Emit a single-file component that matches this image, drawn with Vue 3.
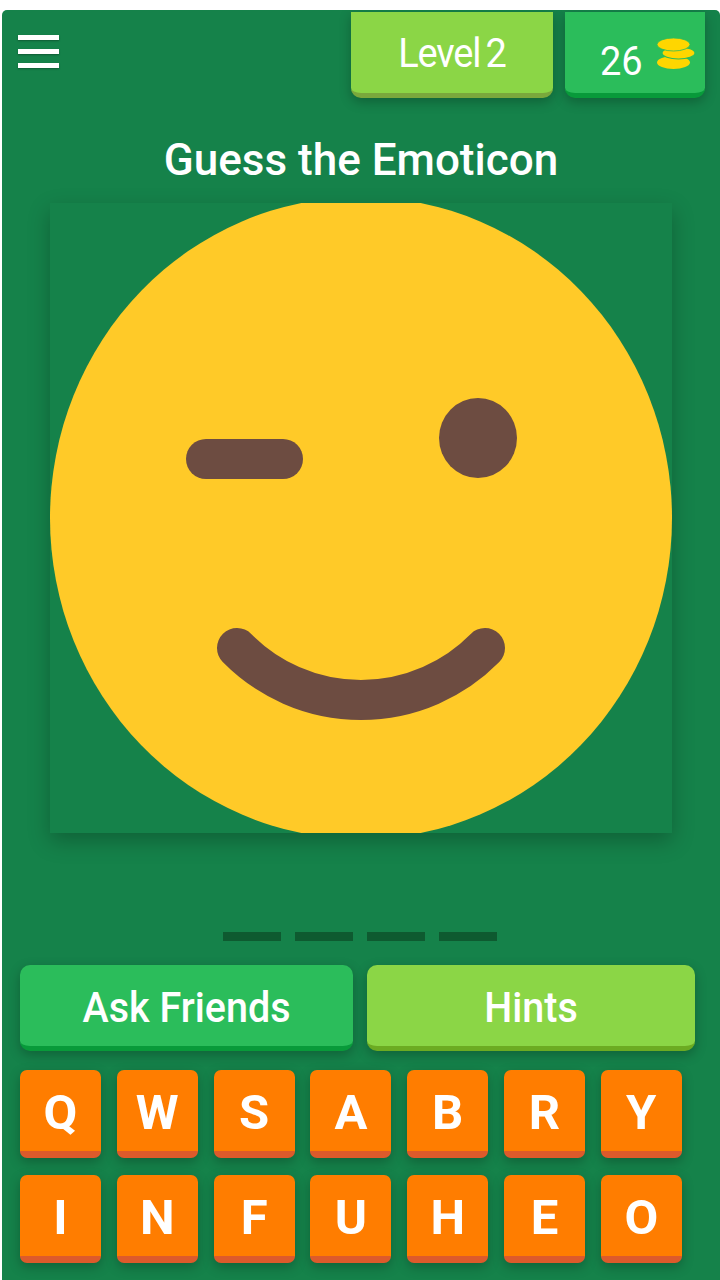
<script setup>
const rows = [
  ['Q', 'W', 'S', 'A', 'B', 'R', 'Y'],
  ['I', 'N', 'F', 'U', 'H', 'E', 'O']
]
const blanks = [1, 2, 3, 4]
</script>

<template>
  <div class="screen">
    <header class="topbar">
      <div class="menu">
        <span></span>
        <span></span>
        <span></span>
      </div>
      <div class="btn lime level"><span class="stretch">Level 2</span></div>
      <div class="btn green coins">
        <span class="stretch">26</span>
        <svg class="coin-icon" width="38" height="31" viewBox="0 0 38 31">
          <ellipse cx="16.5" cy="24.5" rx="16.5" ry="6.5" fill="#ffd600" />
          <ellipse cx="21.5" cy="15" rx="16.5" ry="6" fill="#ffd600" stroke="#2bbd5b" stroke-width="1.2" />
          <ellipse cx="16.5" cy="6.5" rx="16.5" ry="6.5" fill="#ffd600" stroke="#2bbd5b" stroke-width="0.8" />
        </svg>
      </div>
    </header>

    <h1 class="title">Guess the Emoticon</h1>

    <div class="picture">
      <svg width="622" height="630" viewBox="0 0 622 630">
        <ellipse cx="311" cy="315" rx="311" ry="321" fill="#ffca28" />
        <rect x="136" y="236" width="117" height="40" rx="20" fill="#6d4c41" />
        <ellipse cx="428" cy="235" rx="39" ry="40" fill="#6d4c41" />
        <path d="M187 445 A174 174 0 0 0 435 445" fill="none" stroke="#6d4c41" stroke-width="40" stroke-linecap="round" />
      </svg>
    </div>

    <div class="blanks">
      <span v-for="b in blanks" :key="b"></span>
    </div>

    <div class="actions">
      <div class="btn green ask"><span class="stretch">Ask Friends</span></div>
      <div class="btn lime hints"><span class="stretch">Hints</span></div>
    </div>

    <div class="keyboard">
      <div v-for="(row, i) in rows" :key="i" class="key-row">
        <div v-for="letter in row" :key="letter" class="key">{{ letter }}</div>
      </div>
    </div>
  </div>
</template>

<style scoped>
.screen {
  margin: 10px 0 0 2px;
  height: 1270px;
  background: #15824a;
  border-radius: 5px 5px 0 0;
  overflow: hidden;
  font-family: Roboto, "Liberation Sans", sans-serif;
  color: #fff;
}

.stretch {
  display: inline-block;
  transform: scaleY(1.06);
}

.topbar {
  display: flex;
  align-items: flex-start;
  height: 88px;
  padding: 2px 15px 0 16px;
}

.menu {
  display: flex;
  flex-direction: column;
  gap: 9px;
  width: 41px;
  margin-top: 23px;
}

.menu span {
  height: 5px;
  background: #fff;
  box-shadow: 0 1px 2px rgba(0, 0, 0, 0.3);
}

.btn {
  display: flex;
  align-items: center;
  justify-content: center;
  box-sizing: border-box;
  border-radius: 10px;
}

.green {
  background: #2bbd5b;
  border-bottom: 5px solid #089a3a;
  box-shadow: 0 4px 12px rgba(0, 0, 0, 0.25);
}

.lime {
  background: #8bd646;
  border-bottom: 5px solid #7aa83c;
  box-shadow: 0 4px 12px rgba(0, 0, 0, 0.25);
}

.level {
  width: 202px;
  height: 86px;
  margin-left: auto;
  border-radius: 0 0 10px 10px;
  font-size: 38px;
  letter-spacing: -1.2px;
  word-spacing: -3px;
}

.coins {
  width: 140px;
  height: 86px;
  margin-left: 12px;
  border-radius: 0 0 10px 10px;
  font-size: 38px;
  justify-content: flex-start;
  padding: 16px 0 0 35px;
}

.coin-icon {
  margin: -14px 0 0 14px;
}

.title {
  margin: 0;
  padding-top: 36px;
  height: 84px;
  box-sizing: border-box;
  text-align: center;
  font-size: 44px;
  line-height: 48px;
  font-weight: 500;
}

.picture {
  width: 622px;
  height: 630px;
  margin: 19px 0 0 48px;
  overflow: hidden;
  box-shadow: 0 8px 20px rgba(0, 0, 0, 0.25);
}

.picture svg {
  display: block;
}

.blanks {
  display: flex;
  justify-content: center;
  gap: 14px;
  margin: 99px 0 0 -2px;
}

.blanks span {
  width: 58px;
  height: 9px;
  background: #0e5a30;
}

.actions {
  display: flex;
  gap: 14px;
  margin: 24px 0 0 18px;
}

.actions .btn {
  height: 86px;
  font-size: 39.5px;
  font-weight: 500;
  padding-top: 4px;
}

.ask {
  width: 333px;
}

.hints {
  width: 328px;
  border-bottom-color: #6cab22;
}

.keyboard {
  display: flex;
  flex-direction: column;
  gap: 17px;
  margin: 19px 0 0 18px;
}

.key-row {
  display: flex;
  gap: 15.8px;
}

.key {
  display: flex;
  align-items: center;
  justify-content: center;
  box-sizing: border-box;
  width: 81px;
  height: 88px;
  padding-top: 4px;
  background: #ff7d00;
  border-bottom: 7px solid #dd5a2b;
  border-radius: 7px;
  box-shadow: 0 4px 12px rgba(0, 0, 0, 0.25);
  font-size: 49px;
  font-weight: 700;
}
</style>

<style>
html,
body {
  background: #fff;
}
</style>
